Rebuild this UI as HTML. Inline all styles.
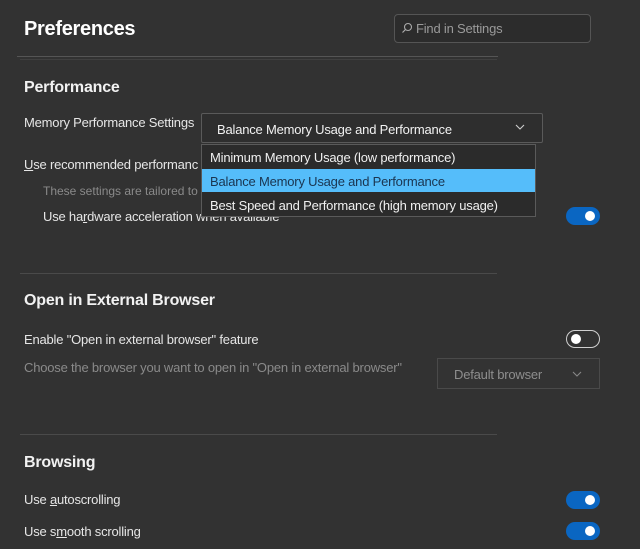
<!DOCTYPE html>
<html><head><meta charset="utf-8"><style>
*{margin:0;padding:0;box-sizing:border-box}
body{width:640px;height:549px;background:#323232;font-family:"Liberation Sans",sans-serif;color:#e6e6e6;position:relative;overflow:hidden;font-size:13px}
.a{position:absolute;white-space:nowrap}
h1{position:absolute;left:24px;top:18px;font-size:20px;font-weight:bold;color:#fff;letter-spacing:-0.3px}
h2{position:absolute;left:24px;font-size:16px;font-weight:bold;color:#f2f2f2;letter-spacing:-0.2px}
.t{font-size:13px;letter-spacing:-0.2px}
.g{color:#8a8a8a}
.tog{position:absolute;left:566px;width:34px;height:18px;border-radius:9px;background:#0a66c2}
.tog::after{content:"";position:absolute;right:5px;top:4px;width:10px;height:10px;border-radius:50%;background:#fff}
.off{background:transparent;border:1px solid #d0d0d0}
.off::after{left:4px;right:auto;top:3px}
.hr{position:absolute;left:20px;width:477px;height:1px;background:#4a4a4a}
u{text-decoration:underline}
</style></head><body>
<h1>Preferences</h1>
<div class="a" style="left:394px;top:14px;width:197px;height:29px;border:1px solid #555;border-radius:4px;background:#2c2c2c"></div>
<svg class="a" style="left:401px;top:22px" width="12" height="12" viewBox="0 0 12 12"><circle cx="7" cy="5" r="3.5" fill="none" stroke="#aaa" stroke-width="1.1"/><path d="M4.5 7.5L1.5 10.5" stroke="#aaa" stroke-width="1.2"/></svg>
<div class="a t" style="left:416px;top:21px;color:#9a9a9a">Find in Settings</div>
<div class="hr" style="top:56px;left:17px;width:481px;background:#555"></div>
<div class="hr" style="top:59px;background:#404040"></div>

<h2 style="top:79px">Performance</h2>
<div class="a t" style="left:24px;top:115px">Memory Performance Settings</div>
<div class="a" style="left:201px;top:113px;width:342px;height:30px;border:1px solid #5a5a5a;border-radius:2px;background:#2e2e2e"></div>
<div class="a t" style="left:217px;top:122px;color:#f2f2f2">Balance Memory Usage and Performance</div>
<svg class="a" style="left:515px;top:124px" width="10" height="6" viewBox="0 0 10 6"><path d="M1 1l4 4 4-4" fill="none" stroke="#ccc" stroke-width="1.1"/></svg>
<div class="a t" style="left:24px;top:157px"><u>U</u>se recommended performanc</div>
<div class="a g" style="left:43px;top:184px;font-size:12px">These settings are tailored to y</div>
<div class="a t" style="left:43px;top:209px">Use ha<u>r</u>dware acceleration when available</div>
<div class="a" style="left:201px;top:144px;width:335px;height:73px;border:1px solid #5a5a5a;background:#2b2b2b"></div>
<div class="a" style="left:202px;top:169px;width:333px;height:23px;background:#55bdfa"></div>
<div class="a t" style="left:210px;top:150px;color:#f0f0f0">Minimum Memory Usage (low performance)</div>
<div class="a t" style="left:210px;top:174px;color:#1a3550">Balance Memory Usage and Performance</div>
<div class="a t" style="left:210px;top:198px;color:#f0f0f0">Best Speed and Performance (high memory usage)</div>
<div class="tog" style="top:207px"></div>

<div class="hr" style="top:273px"></div>
<h2 style="top:292px">Open in External Browser</h2>
<div class="a t" style="left:24px;top:332px">Enable "Open in external browser" feature</div>
<div class="tog off" style="top:330px"></div>
<div class="a t g" style="left:24px;top:360px">Choose the browser you want to open in "Open in external browser"</div>
<div class="a" style="left:437px;top:358px;width:163px;height:31px;border:1px solid #4a4a4a;background:#333"></div>
<div class="a t" style="left:454px;top:367px;color:#8e8e8e">Default browser</div>
<svg class="a" style="left:572px;top:371px" width="10" height="6" viewBox="0 0 10 6"><path d="M1 1l4 4 4-4" fill="none" stroke="#888" stroke-width="1.1"/></svg>

<div class="hr" style="top:434px"></div>
<h2 style="top:454px">Browsing</h2>
<div class="a t" style="left:24px;top:492px">Use <u>a</u>utoscrolling</div>
<div class="tog" style="top:491px"></div>
<div class="a t" style="left:24px;top:524px">Use s<u>m</u>ooth scrolling</div>
<div class="tog" style="top:522px"></div>
</body></html>
